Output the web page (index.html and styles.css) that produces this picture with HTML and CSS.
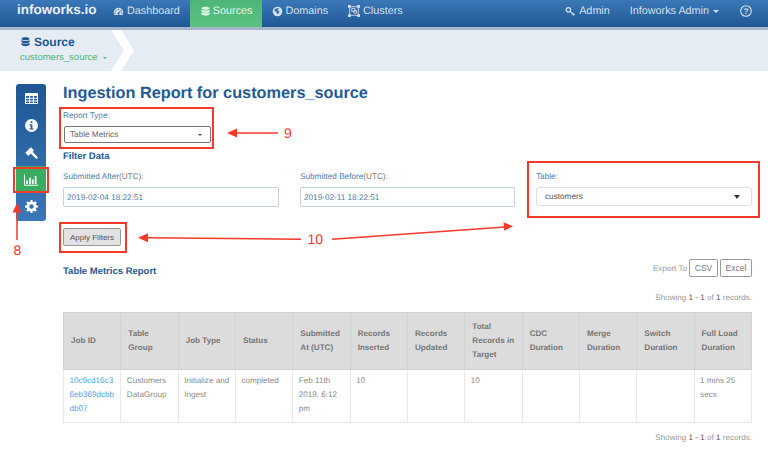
FILE: index.html
```html
<!DOCTYPE html>
<html lang="en">
<head>
<meta charset="utf-8">
<title>Ingestion Report</title>
<link rel="stylesheet" href="styles.css">
</head>
<body>
<header class="nav">
  <div class="brand">infoworks.io</div>
  <a class="nav-item nav-first"><svg class="ni" viewBox="0 0 16 16"><path fill="currentColor" fill-rule="evenodd" d="M8 2.500A7 7 0 0 0 1 9.500c0 1.300.3 2.500.9 3.500h12.200c.6-1 .9-2.200.9-3.500a7 7 0 0 0-7-7zM8 4a1 1 0 1 1 0 2 1 1 0 0 1 0-2zM4 6a1 1 0 1 1 0 2 1 1 0 0 1 0-2zm8 0a1 1 0 1 1 0 2 1 1 0 0 1 0-2zM3 9.500a1 1 0 1 1 0 2 1 1 0 0 1 0-2zm10 0a1 1 0 1 1 0 2 1 1 0 0 1 0-2zM10.300 6.500l.8.5L9.300 10a1.500 1.500 0 1 1-.9-.5z"/></svg>Dashboard</a>
  <a class="nav-item active"><svg class="ni" viewBox="0 0 16 16"><path fill="currentColor" d="M8 1c3.500 0 6 1 6 2.200S11.500 5.400 8 5.400 2 4.400 2 3.200 4.500 1 8 1zM2 5c1 1 3.500 1.500 6 1.500S13 6 14 5v2.500c0 1.200-2.500 2.200-6 2.200s-6-1-6-2.200zM2 9.200c1 1 3.500 1.500 6 1.500s5-.5 6-1.500v2.600c0 1.200-2.500 2.200-6 2.200s-6-1-6-2.200z"/></svg>Sources</a>
  <a class="nav-item"><svg class="ni" viewBox="0 0 16 16"><path fill="currentColor" fill-rule="evenodd" d="M8 1a7 7 0 1 1 0 14A7 7 0 0 1 8 1zM6 3.500 3.500 5 4 7.500l2.500 1 .5 2 1.500 2 1-2.500 1.500-1.500-1.500-1.500L7.500 6.500 8.500 5l2-.5L9 3z"/></svg>Domains</a>
  <a class="nav-item"><svg class="ni ni-wide" viewBox="0 0 14 14"><path fill="none" stroke="currentColor" stroke-width="1" d="M2 2h10v10H2zM4.500 4h3.500v3.500H4.500zM7 6.500h3v3H7z"/><path fill="currentColor" d="M0 0h3.200v3.200H0zM10.800 0H14v3.200h-3.200zM0 10.800h3.200V14H0zM10.800 10.800H14V14h-3.200z"/></svg>Clusters</a>
  <div class="nav-spacer"></div>
  <a class="nav-item nav-admin"><svg class="ni" viewBox="0 0 16 16"><path fill="none" stroke="currentColor" stroke-width="1.800" d="M5 2.500a3.200 3.200 0 1 1 0 6.400 3.200 3.200 0 0 1 0-6.400zM7.500 7.800l6.500 5.200M11 10.500l-1.200 1.700M13.200 12.300l-1.200 1.500"/></svg>Admin</a>
  <a class="nav-item nav-user">Infoworks Admin<span class="caret caret-nav"></span></a>
  <a class="nav-help"><svg viewBox="0 0 14 14"><circle cx="7" cy="7" r="6.200" fill="none" stroke="currentColor" stroke-width="1.300"/><text x="7" y="10.400" text-anchor="middle" class="help-q">?</text></svg></a>
</header>

<section class="subhead">
  <div class="crumb">
    <div class="crumb-title"><svg class="crumb-icon" viewBox="0 0 16 16"><path fill="currentColor" d="M8 1c3.500 0 6 1 6 2.200S11.500 5.400 8 5.400 2 4.400 2 3.200 4.500 1 8 1zM2 5c1 1 3.500 1.500 6 1.500S13 6 14 5v2.500c0 1.200-2.500 2.200-6 2.200s-6-1-6-2.200zM2 9.200c1 1 3.500 1.500 6 1.500s5-.5 6-1.500v2.600c0 1.200-2.500 2.200-6 2.200s-6-1-6-2.200z"/></svg>Source</div>
    <div class="crumb-sub">customers_source<span class="caret caret-green"></span></div>
  </div>
  <svg class="chev" viewBox="0 0 24 41"><path d="M0 0h10l13 20.500L10 41H0l13-20.500z" fill="#fff"/></svg>
</section>

<div class="page">
  <aside class="side">
    <a class="side-item"><svg viewBox="0 0 14 12"><path fill="#fff" fill-rule="evenodd" d="M1 0h12a1 1 0 0 1 1 1v10a1 1 0 0 1-1 1H1a1 1 0 0 1-1-1V1a1 1 0 0 1 1-1zm.2 3.200v2h3.200v-2zm4.300 0v2h3v-2zm4.100 0v2h3.200v-2zM1.200 6.200v2h3.200v-2zm4.300 0v2h3v-2zm4.100 0v2h3.200v-2zM1.200 9.200v1.600h3.200V9.200zm4.300 0v1.600h3V9.200zm4.100 0v1.600h3.200V9.200z"/></svg></a>
    <a class="side-item"><svg viewBox="0 0 14 14"><path fill="#fff" fill-rule="evenodd" d="M7 0a7 7 0 1 1 0 14A7 7 0 0 1 7 0zM6 2.300v2h2v-2zM5 5.700v1.300h1v3H5v1.300h4V10H8V5.700z"/></svg></a>
    <a class="side-item"><svg viewBox="0 0 14 14"><path fill="#fff" d="M.3 7.300L6.300 1.300l3.400 3.400-1.400 1.400 5.100 5.700a1 1 0 0 1 0 1.300l-.3.300a1 1 0 0 1-1.300 0L6.100 8l-2.400 2.700z"/></svg></a>
    <a class="side-item side-active"><svg viewBox="0 0 16 13"><path fill="#fff" d="M0 0h1v12h15v1H0zM2.500 7h2v4h-2zM5.800 4h2v7h-2zM9 6h2v5H9zM12.300 2h2v9h-2z"/></svg></a>
    <a class="side-item"><svg viewBox="0 0 14 14"><path fill="#fff" fill-rule="evenodd" d="M6 0h2l.3 1.900 1.300.5L11.200 1.300l1.500 1.500-1.100 1.600.5 1.300L14 6v2l-1.900.3-.5 1.300 1.100 1.600-1.500 1.500-1.600-1.100-1.300.5L8 14H6l-.3-1.900-1.300-.5-1.600 1.100-1.500-1.500 1.100-1.600-.5-1.300L0 8V6l1.900-.3.500-1.300L1.300 2.800l1.500-1.500 1.600 1.100 1.300-.5zM7 4.600a2.400 2.400 0 1 0 0 4.800 2.400 2.400 0 0 0 0-4.800z"/></svg></a>
  </aside>

  <main class="main">
    <h1 class="title">Ingestion Report for customers_source</h1>
    <label class="label report-label">Report Type:</label>
    <div class="select select-report"><span>Table Metrics</span><span class="caret caret-dark"></span></div>
    <h2 class="filter-title">Filter Data</h2>
    <div class="filters">
      <div class="field">
        <label class="label">Submitted After<span class="muted">(UTC):</span></label>
        <div class="input">2019-02-04 18:22:51</div>
      </div>
      <div class="field field-mid">
        <label class="label">Submitted Before<span class="muted">(UTC):</span></label>
        <div class="input">2019-02-11 18:22:51</div>
      </div>
      <div class="field field-table">
        <label class="label">Table:</label>
        <div class="select select-table"><span>customers</span><span class="caret caret-big"></span></div>
      </div>
    </div>
    <button class="apply">Apply Filters</button>
    <div class="report-head">
      <h3 class="report-title">Table Metrics Report</h3>
      <div class="export"><span>Export To</span><button class="btn btn-csv">CSV</button><button class="btn btn-excel">Excel</button></div>
    </div>
    <p class="showing showing-top">Showing <b>1 - 1</b> of <b>1</b> records.</p>
    <table class="grid">
      <thead>
        <tr><th>Job ID</th><th>Table Group</th><th>Job Type</th><th>Status</th><th>Submitted At (UTC)</th><th>Records Inserted</th><th>Records Updated</th><th>Total Records in Target</th><th>CDC Duration</th><th>Merge Duration</th><th>Switch Duration</th><th>Full Load Duration</th></tr>
      </thead>
      <tbody>
        <tr><td><a class="job">10c9cd16c36eb369dcbbdb07</a></td><td>Customers DataGroup</td><td>Initialize and Ingest</td><td>completed</td><td>Feb 11th 2019, 6:12 pm</td><td>10</td><td></td><td>10</td><td></td><td></td><td></td><td>1 mins 25 secs</td></tr>
      </tbody>
    </table>
    <p class="showing showing-bottom">Showing <b>1 - 1</b> of <b>1</b> records.</p>
  </main>
</div>

<div class="mark mark-side"></div>
<div class="mark mark-report"></div>
<div class="mark mark-table"></div>
<div class="mark mark-apply"></div>
<svg class="arrows" viewBox="0 0 768 473">
  <g stroke="#f4392b" stroke-width="1.500" fill="#f4392b">
    <path d="M236 133H278" fill="none"/><path d="M227 133l10-4.500v9z" stroke="none"/>
    <path d="M17 240V210" fill="none"/><path d="M17 203l-4.500 9.500h9z" stroke="none"/>
    <path d="M147 237.800L301 239.300" fill="none"/><path d="M138 237.700l10-4.500v9z" stroke="none"/>
    <path d="M332 239.300L505 227" fill="none"/><path d="M513 226.300l-9.500-4 .7 8.500z" stroke="none"/>
  </g>
</svg>
<span class="num num-9">9</span>
<span class="num num-8">8</span>
<span class="num num-10">10</span>
</body>
</html>
```
FILE: styles.css
```css
* { box-sizing: border-box; }
html, body { margin: 0; padding: 0; }
body {
  width: 768px;
  height: 473px;
  overflow: hidden;
  position: relative;
  background: #fff;
  font-family: "Liberation Sans", Arial, sans-serif;
  color: #777;
  text-rendering: geometricPrecision;
}
.nav {
  display: flex;
  align-items: stretch;
  height: 30px;
  padding-left: 17px;
  background: linear-gradient(#3b78b8, #1f5794);
  border-bottom: 3px solid #a6b6ca;
  color: #d5e0ec;
  font-size: 10.800px;
}
.brand {
  font-size: 13.500px;
  font-weight: bold;
  color: #e8eef5;
  line-height: 20px;
  width: 96px;
}
.nav-item { display: flex; align-items: center; padding: 0 10px 5px; white-space: nowrap; }
.nav-first { padding-left: 0; }
.nav-first .ni { margin-right: 3px; }
.active { background: linear-gradient(#4cb578, #5cc283); color: #e4f5ea; }
.ni { width: 11px; height: 11px; margin-right: 2px; flex: none; }
.ni-wide { width: 12px; height: 12px; margin-right: 3px; }
.nav-spacer { flex: 1; }
.nav-admin { padding: 0 0 5px; margin-right: 20px; }
.nav-admin .ni { width: 11px; margin-right: 3px; }
.nav-user { padding: 0 0 5px; margin-right: 21px; }
.nav-help { display: flex; align-items: center; width: 12px; margin-right: 16px; padding-bottom: 5px; }
.nav-help svg { width: 12px; height: 12px; }
.help-q { font-size: 9.500px; font-weight: bold; fill: currentColor; font-family: "Liberation Sans", sans-serif; }
.caret { display: inline-block; width: 0; height: 0; border-style: solid; border-color: transparent; border-width: 3px 3px 0; }
.caret-nav { border-top-color: #d5e0ec; margin-left: 4px; margin-top: 1px; }
.caret-green { border-top-color: #4db77a; border-width: 2.500px 2.500px 0; margin-left: 5px; vertical-align: 1px; }
.caret-dark { border-top-color: #444; border-width: 2.500px; border-bottom-width: 0; }
.caret-big { border-top-color: #333; border-width: 4px 3.500px 0; }
.subhead { display: flex; height: 41px; background: #e6ecf4; padding-left: 20px; }
.crumb { width: 90.500px; }
.crumb-title { display: flex; align-items: center; height: 22px; padding-top: 1px; color: #235a96; font-size: 12px; font-weight: bold; }
.crumb-icon { width: 11px; height: 12px; margin-right: 3px; }
.crumb-sub { font-size: 9.500px; color: #4db77a; line-height: 12px; }
.chev { width: 24px; height: 41px; }
.page { display: flex; padding: 13px 16px 0; }
.side { width: 30px; height: 137px; margin-right: 17px; border-radius: 3px; background: linear-gradient(#1f5794, #3a77b8); display: flex; flex-direction: column; padding-top: 1px; flex: none; }
.side-item { height: 27px; display: flex; align-items: center; justify-content: center; }
.side-item svg { width: 13px; height: 13px; }
.side-item.side-active svg { width: 14px; height: 12px; }
.side-active { background: #3aac60; }
.main { flex: 1; min-width: 0; }
.title { margin: 0; font-size: 16.300px; line-height: 19px; color: #235a96; font-weight: bold; }
.label { display: block; font-size: 8.200px; line-height: 10px; color: #4f7bab; }
.muted { color: #777; }
.report-label { margin-top: 8px; }
.select { display: flex; align-items: center; justify-content: space-between; background: #fff; color: #666; font-size: 8.200px; }
.select-report { width: 147px; height: 17px; margin: 5px 0 0 1px; padding: 0 8px 0 5px; border: 1px solid #777; border-radius: 2px; }
.filter-title { margin: 8px 0 0; font-size: 9.500px; line-height: 12px; color: #235a96; font-weight: bold; }
.filters { display: flex; margin-top: 7px; height: 50px; }
.field { width: 216px; margin-right: 21px; flex: none; }
.field-mid { width: 215px; }
.field .label { margin-top: 2px; }
.input { margin-top: 5px; height: 20px; line-height: 20px; padding-left: 3px; border: 1px solid #c3d0de; border-radius: 2px; color: #4f7bab; font-size: 8.200px; }
.field-table { margin-right: 0; }
.select-table { margin-top: 5px; height: 19px; padding: 0 11px 0 8px; border: 1px solid #dcdfe3; border-radius: 3px; color: #555; }
.apply { display: block; width: 58px; height: 18px; margin-top: 8px; padding: 0; border: 1px solid #999; border-radius: 2px; background: #e2e2e2; color: #555; font: 8px "Liberation Sans", sans-serif; }
.report-head { display: flex; justify-content: space-between; align-items: flex-end; height: 18px; margin-top: 13px; }
.report-title { margin: 0; font-size: 9.500px; line-height: 11px; color: #235a96; font-weight: bold; }
.export { display: flex; align-items: center; font-size: 8.100px; color: #999; }
.export span { margin-right: 2px; }
.btn { height: 18px; padding: 0; background: #fff; border: 1px solid #999; border-radius: 2px; color: #777; font: 8.500px "Liberation Sans", sans-serif; }
.btn-csv { width: 29px; }
.btn-excel { width: 32px; margin-left: 2px; }
.showing { margin: 0; text-align: right; font-size: 8.100px; line-height: 12px; color: #999; }
.showing b { font-weight: normal; color: #555; }
.showing-top { margin-top: 15px; }
.grid { width: 689px; margin-top: 8px; border-collapse: collapse; table-layout: fixed; font-size: 8.100px; line-height: 14px; }
.grid th { height: 57px; padding: 0 7px; text-align: left; background: #dcdcdc; color: #777; font-weight: bold; border: 1px solid #d2d2d2; }
.grid td { height: 53px; padding: 4px 5.500px; vertical-align: top; color: #888; border: 1px solid #e8e8e8; }
.job { color: #4aa5ef; word-break: break-all; }
.showing-bottom { margin-top: 9px; }
.mark { position: absolute; border: 2px solid #f4392b; }
.mark-side { left: 13px; top: 167px; width: 36px; height: 26px; }
.mark-report { left: 59px; top: 107px; width: 155px; height: 42px; }
.mark-table { left: 527px; top: 161px; width: 233px; height: 57px; }
.mark-apply { left: 59px; top: 222px; width: 68px; height: 31px; }
.arrows { position: absolute; left: 0; top: 0; width: 768px; height: 473px; pointer-events: none; }
.num { position: absolute; color: #f4392b; font-size: 14px; line-height: 14px; }
.num-9 { left: 284px; top: 126px; }
.num-8 { left: 13.500px; top: 243px; }
.num-10 { left: 307.500px; top: 232px; }
```
